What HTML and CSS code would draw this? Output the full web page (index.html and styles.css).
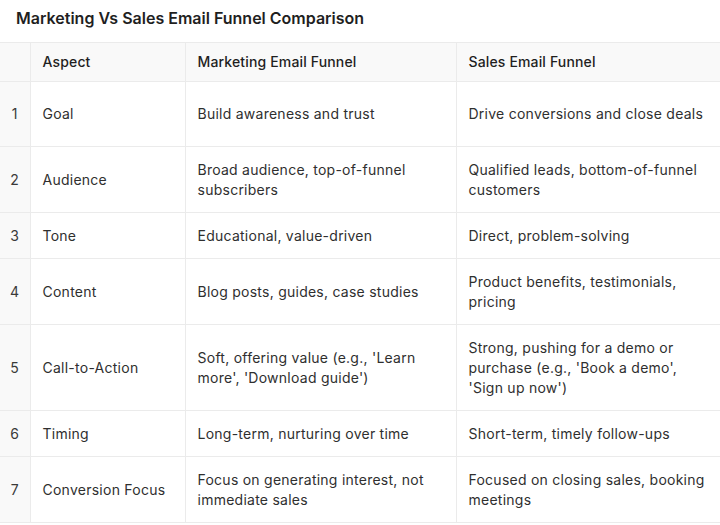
FILE: index.html
```html
<!DOCTYPE html>
<html lang="en">
<head>
<meta charset="utf-8">
<title>Marketing Vs Sales Email Funnel Comparison</title>
<link rel="stylesheet" href="styles.css">
</head>
<body>
<div class="page">
  <h1 class="title">Marketing Vs Sales Email Funnel Comparison</h1>
  <table class="grid">
    <colgroup>
      <col class="c-idx">
      <col class="c-aspect">
      <col class="c-mkt">
      <col class="c-sales">
    </colgroup>
    <thead>
      <tr class="r-head">
        <th class="idx"></th>
        <th>Aspect</th>
        <th>Marketing Email Funnel</th>
        <th>Sales Email Funnel</th>
      </tr>
    </thead>
    <tbody>
      <tr class="r1">
        <td class="idx">1</td>
        <td>Goal</td>
        <td>Build awareness and trust</td>
        <td>Drive conversions and close deals</td>
      </tr>
      <tr class="r2">
        <td class="idx">2</td>
        <td>Audience</td>
        <td>Broad audience, top-of-funnel subscribers</td>
        <td>Qualified leads, bottom-of-funnel customers</td>
      </tr>
      <tr class="r3">
        <td class="idx">3</td>
        <td>Tone</td>
        <td>Educational, value-driven</td>
        <td>Direct, problem-solving</td>
      </tr>
      <tr class="r4">
        <td class="idx">4</td>
        <td>Content</td>
        <td>Blog posts, guides, case studies</td>
        <td>Product benefits, testimonials, pricing</td>
      </tr>
      <tr class="r5">
        <td class="idx">5</td>
        <td>Call-to-Action</td>
        <td>Soft, offering value (e.g., 'Learn more', 'Download guide')</td>
        <td>Strong, pushing for a demo or purchase (e.g., 'Book a demo', 'Sign up now')</td>
      </tr>
      <tr class="r6">
        <td class="idx">6</td>
        <td>Timing</td>
        <td>Long-term, nurturing over time</td>
        <td>Short-term, timely follow-ups</td>
      </tr>
      <tr class="r7">
        <td class="idx">7</td>
        <td>Conversion Focus</td>
        <td>Focus on generating interest, not immediate sales</td>
        <td>Focused on closing sales, booking meetings</td>
      </tr>
    </tbody>
  </table>
</div>
</body>
</html>
```

FILE: styles.css
```css
html, body {
  margin: 0;
  padding: 0;
  background: #ffffff;
  overflow: hidden;
}
body {
  font-family: Inter, "Liberation Sans", sans-serif;
  color: #2f2f2f;
  width: 720px;
  height: 525px;
}
.page {
  width: 720px;
  overflow: hidden;
}
.title {
  margin: 0;
  padding: 8px 16px 0;
  height: 34px;
  font-size: 16px;
  line-height: 20px;
  font-weight: 600;
  color: #1f1f1f;
  box-sizing: border-box;
}
.grid {
  border-collapse: collapse;
  table-layout: fixed;
  width: 721px;
  margin-top: 8px;
  font-size: 14px;
  line-height: 20px;
  letter-spacing: 0.25px;
}
.c-idx { width: 30px; }
.c-aspect { width: 155px; }
.c-mkt { width: 271px; }
.c-sales { width: 265px; }
.grid th, .grid td {
  border: 1px solid #ebebeb;
  padding: 0 12px;
  text-align: left;
  vertical-align: middle;
  font-weight: 400;
}
.grid tr > :first-child { border-left: none; }
.grid th {
  background: #f9f9f9;
  color: #1f1f1f;
  font-weight: 500;
  letter-spacing: 0.15px;
}
.grid .idx {
  background: #f9f9f9;
  padding: 0;
  text-align: center;
  color: #3a3a3a;
}
.r-head { height: 39px; }
.r1 { height: 65px; }
.r2 { height: 66px; }
.r3 { height: 46px; }
.r4 { height: 66px; }
.r5 { height: 86px; }
.r6 { height: 46px; }
.r7 { height: 66px; }
```
